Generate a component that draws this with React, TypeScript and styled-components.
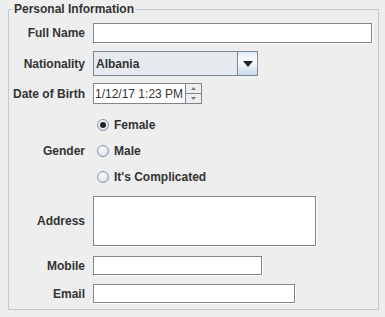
import React from "react";
import styled, { createGlobalStyle } from "styled-components";

const Global = createGlobalStyle`
  html, body { margin: 0; padding: 0; background: #eeeeee; }
  body { font-family: "Liberation Sans", Arial, sans-serif; color: #333333; }
  * { box-sizing: border-box; }
`;

const Group = styled.fieldset`
  margin: 2px 6px 0 8px;
  padding: 0 0 6px 0;
  border: 1px solid #c3cad4;
  min-width: 0;
  height: 308px;
`;

const Title = styled.legend`
  margin-left: 3px;
  padding: 0 2px;
  font-size: 12px;
  font-weight: bold;
  line-height: 14px;
  color: #333333;
`;

const Row = styled.div<{ $gap: number }>`
  display: grid;
  grid-template-columns: 76px 1fr;
  column-gap: 8px;
  align-items: center;
  margin-top: ${(p) => p.$gap}px;
`;

const Label = styled.label`
  text-align: right;
  font-size: 12px;
  font-weight: bold;
  line-height: 14px;
  white-space: nowrap;
`;

const Field = styled.div<{ $w: number; $h: number }>`
  width: ${(p) => p.$w}px;
  height: ${(p) => p.$h}px;
  background: #ffffff;
  border: 1px solid #7e8690;
  box-shadow: 1px 1px 0 #ffffff;
`;

const Combo = styled.div`
  width: 165px;
  height: 25px;
  display: flex;
  border: 1px solid #7a8a99;
  background: #e6e9ee;
`;

const ComboText = styled.div`
  flex: 1;
  display: flex;
  align-items: center;
  padding-left: 2px;
  font-size: 12px;
  font-weight: bold;
  color: #333333;
  border-right: 1px solid #7a8a99;
`;

const ComboButton = styled.div`
  width: 19px;
  display: flex;
  align-items: center;
  justify-content: center;
  background: linear-gradient(#dfe8f2, #ffffff 40%, #c6d6e8);
`;

const Spinner = styled.div`
  width: 109px;
  height: 21px;
  display: flex;
  border: 1px solid #7e8690;
  background: #ffffff;
`;

const SpinText = styled.div`
  flex: 1;
  display: flex;
  align-items: center;
  padding-left: 1px;
  font-size: 12px;
  color: #333333;
  white-space: nowrap;
  overflow: hidden;
`;

const SpinButtons = styled.div`
  width: 16px;
  display: flex;
  flex-direction: column;
  border-left: 1px solid #7e8690;
`;

const SpinButton = styled.div<{ $bottom?: boolean }>`
  flex: 1;
  display: flex;
  align-items: center;
  justify-content: center;
  background: #eeeeee;
  border-top: ${(p) => (p.$bottom ? "1px solid #7e8690" : "none")};
`;

const Radios = styled.div`
  display: flex;
  flex-direction: column;
`;

const Radio = styled.div`
  height: 26px;
  display: flex;
  align-items: center;
  gap: 5px;
  padding-left: 4px;
  font-size: 12px;
  font-weight: bold;
`;

const Circle = styled.span<{ $on?: boolean }>`
  width: 12px;
  height: 12px;
  border-radius: 50%;
  border: 1px solid #8a96a3;
  background: radial-gradient(circle at 40% 35%, #ffffff 0%, #e4ebf3 55%, #c1d0e0 100%);
  display: flex;
  align-items: center;
  justify-content: center;
  &::after {
    content: "";
    width: 6px;
    height: 6px;
    border-radius: 50%;
    background: ${(p) => (p.$on ? "#222222" : "transparent")};
  }
`;

export default function App() {
  return (
    <>
      <Global />
      <Group>
        <Title>Personal Information</Title>
        <Row $gap={7}>
          <Label>Full Name</Label>
          <Field $w={279} $h={20} />
        </Row>
        <Row $gap={8}>
          <Label>Nationality</Label>
          <Combo>
            <ComboText>Albania</ComboText>
            <ComboButton>
              <svg width="10" height="6" viewBox="0 0 10 6">
                <path d="M0 0 H10 L5 6 Z" fill="#222" />
              </svg>
            </ComboButton>
          </Combo>
        </Row>
        <Row $gap={7}>
          <Label>Date of Birth</Label>
          <Spinner>
            <SpinText>1/12/17 1:23 PM</SpinText>
            <SpinButtons>
              <SpinButton>
                <svg width="5" height="3" viewBox="0 0 5 3">
                  <path d="M0 3 H5 L2.5 0 Z" fill="#777" />
                </svg>
              </SpinButton>
              <SpinButton $bottom>
                <svg width="5" height="3" viewBox="0 0 5 3">
                  <path d="M0 0 H5 L2.5 3 Z" fill="#777" />
                </svg>
              </SpinButton>
            </SpinButtons>
          </Spinner>
        </Row>
        <Row $gap={8}>
          <Label>Gender</Label>
          <Radios>
            <Radio>
              <Circle $on />
              Female
            </Radio>
            <Radio>
              <Circle />
              Male
            </Radio>
            <Radio>
              <Circle />
              It's Complicated
            </Radio>
          </Radios>
        </Row>
        <Row $gap={6}>
          <Label>Address</Label>
          <Field $w={223} $h={50} />
        </Row>
        <Row $gap={10}>
          <Label>Mobile</Label>
          <Field $w={169} $h={19} />
        </Row>
        <Row $gap={9}>
          <Label>Email</Label>
          <Field $w={202} $h={19} />
        </Row>
      </Group>
    </>
  );
}
